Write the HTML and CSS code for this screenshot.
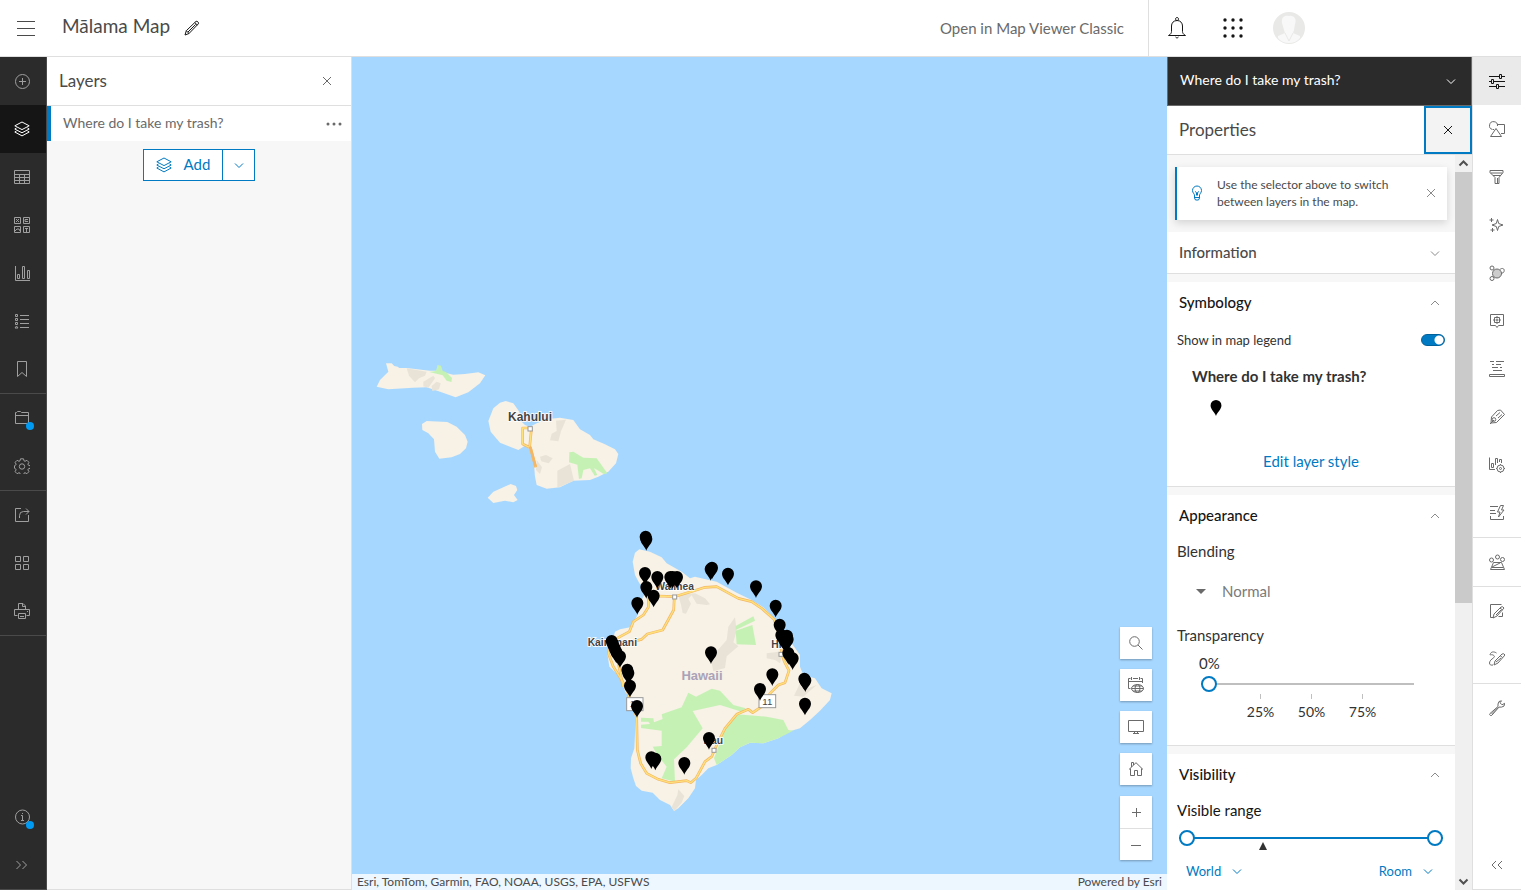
FILE: index.html
```html
<!DOCTYPE html>
<html lang="en">
<head>
<meta charset="utf-8">
<title>Mālama Map</title>
<link rel="stylesheet" href="styles.css">
</head>
<body>
<header class="topbar">
  <button class="plain menu" aria-label="Menu"><svg width="18" height="16" viewBox="0 0 18 16"><path d="M0 1.500h18M0 8.500h18M0 15.500h18"/></svg></button>
  <h1 class="title">Mālama Map</h1>
  <button class="plain edit" aria-label="Edit title"><svg width="16" height="16" viewBox="0 0 16 16"><path d="M1 15l1.300-4.300L12 1.400c1-.8 3.200 1.200 2.400 2.400L5 13.500zM10.800 2.600L13.300 5M2.300 10.700L5 13.500M4 12l7.700-7.600"/></svg></button>
  <a class="classic" href="#">Open in Map Viewer Classic</a>
  <div class="account">
    <button class="plain" aria-label="Notifications"><svg width="18" height="22" viewBox="0 0 18 22"><path d="M9 3.500a1.500 1.500 0 1 1 .1 0C5.500 3.500 3.500 6 3.500 9v5.500c0 1.500-1 3-3 4h17c-2-1-3-2.500-3-4V9c0-3-2-5.500-5.400-5.500M7.500 20c.8 1.200 2.200 1.200 3 0"/></svg></button>
    <button class="plain" aria-label="App launcher"><svg class="solid" width="20" height="20" viewBox="0 0 20 20"><circle cx="2" cy="2" r="1.700"/><circle cx="10" cy="2" r="1.700"/><circle cx="18" cy="2" r="1.700"/><circle cx="2" cy="10" r="1.700"/><circle cx="10" cy="10" r="1.700"/><circle cx="18" cy="10" r="1.700"/><circle cx="2" cy="18" r="1.700"/><circle cx="10" cy="18" r="1.700"/><circle cx="18" cy="18" r="1.700"/></svg></button>
    <button class="plain" aria-label="Profile"><svg class="avatar" width="32" height="32" viewBox="0 0 32 32"><circle cx="16" cy="16" r="16" fill="#e9e9e8"/><path d="M9 11C8 5 12 3 16 4c5-1 8 3 6 8l-1 6-1 3 7 3v2q-4 5-11 5T5 26v-2l7-3-1-3z" fill="#f8f8f8"/><path d="M12 21l4 8 4-8" fill="none" stroke="#e9e9e8"/></svg></button>
  </div>
</header>
<main class="workspace">
  <nav class="rail rail-dark" aria-label="Map tools">
    <button aria-label="Add"><svg class="ico" viewBox="0 0 16 16"><circle cx="8.500" cy="8.500" r="7"/><path d="M8.500 5v7M5 8.500h7"/></svg></button>
    <button class="active" aria-label="Layers"><svg class="ico" viewBox="0 0 16 16"><path d="M8 1L.8 4.800 8 8.600l7.200-3.800zM2.500 7L.8 8 8 11.800 15.200 8l-1.700-1M2.500 10L.8 11 8 14.900l7.200-3.900-1.700-1"/></svg></button>
    <button aria-label="Tables"><svg class="ico" viewBox="0 0 16 16"><path d="M.5 1.500h15v13H.5zM.5 5.500h15M.5 8.500h15M.5 11.500h15M5.500 5.500v9M10.500 5.500v9"/></svg></button>
    <button aria-label="Basemap"><svg class="ico" viewBox="0 0 16 16"><path d="M.5.5h6v6h-6zM9.500.5h6v6h-6zM.5 9.500h6v6h-6zM9.500 9.500h6v6h-6zM2 2l3 3M5 2L2 5M14 2.500h-3v2h3M1 14l2-2h2l1 2M11 11.500h3M12.500 12v3"/></svg></button>
    <button aria-label="Charts"><svg class="ico" viewBox="0 0 16 16"><path d="M1.500 1v14.500H16M3.500 9.500h2v4h-2zM8.500 1.500h2v12h-2zM13.500 5.500h2v8h-2z"/></svg></button>
    <button aria-label="Legend"><svg class="ico" viewBox="0 0 16 16"><path d="M6 2.500h9M6 6.500h9M6 10.500h9M6 14.500h9M1.500 1.500h2v2h-2zM1.500 5.500h2v2h-2zM1.500 9.500h2v2h-2zM1 15l1.500-2L4 15z"/></svg></button>
    <button class="group-end" aria-label="Bookmarks"><svg class="ico" viewBox="0 0 16 16"><path d="M3.500.5h9v15L8 11.500l-4.500 4z"/></svg></button>
    <button aria-label="Save and open"><svg class="ico" viewBox="0 0 16 16"><path d="M1.500 13.500v-11h1l1-1h3l1 1h7v11zM1.500 5.500h13"/></svg><span class="dot"></span></button>
    <button class="group-end" aria-label="Map properties"><svg class="ico" viewBox="0 0 16 16"><use href="#gear"/></svg></button>
    <button aria-label="Share"><svg class="ico" viewBox="0 0 16 16"><path d="M7 1.500H1.500v13h13V8M5.500 11V8.500q0-4 4-4H15M12 1.500l3 3-3 3"/></svg></button>
    <button aria-label="Create app"><svg class="ico" viewBox="0 0 16 16"><path d="M1.500 1.500h5v5h-5zM9.500 1.500h5v5h-5zM1.500 9.500h5v5h-5zM9.500 9.500h5v5h-5z"/></svg></button>
    <button class="group-end" aria-label="Print"><svg class="ico" viewBox="0 0 16 16"><path d="M4.500 6.500v-6H9l2.500 2.500v3.500M8.500 1v2.500h3M3.500 12.500h-3v-6h15v6h-3M4.500 10.500h7v5h-7zM6 13.500h4M13 8.500h1"/></svg></button>
    <span class="spacer"></span>
    <button aria-label="About"><svg class="ico" viewBox="0 0 16 16"><circle cx="8.500" cy="8" r="7"/><path d="M7 6.500h1.500v5M7 11.500h3M8 4.500h1"/></svg><span class="dot"></span></button>
    <button aria-label="Expand"><svg class="ico" viewBox="0 0 16 16"><path d="M2.500 4l4 4-4 4M8.500 4l4 4-4 4"/></svg></button>
  </nav>

  <section class="layers" aria-label="Layers">
    <div class="layers-head"><h2>Layers</h2><button class="plain" aria-label="Close"><svg class="ico" viewBox="0 0 16 16"><use href="#x"/></svg></button></div>
    <div class="layer-row"><span class="label">Where do I take my trash?</span><button class="plain" aria-label="Options"><svg class="ico solid" viewBox="0 0 16 16"><circle cx="2" cy="8" r="1.500"/><circle cx="8" cy="8" r="1.500"/><circle cx="14" cy="8" r="1.500"/></svg></button></div>
    <div class="split">
      <button class="add"><svg class="ico" viewBox="0 0 16 16"><path d="M8 1L.8 4.800 8 8.600l7.200-3.800zM2.500 7L.8 8 8 11.800 15.200 8l-1.700-1M2.500 10L.8 11 8 14.900l7.200-3.900-1.700-1"/></svg><span class="label">Add</span></button>
      <button class="more" aria-label="More add options"><svg class="ico" viewBox="0 0 16 16"><use href="#down"/></svg></button>
    </div>
  </section>

  <section class="map" aria-label="Map">
    <svg class="canvas" viewBox="352 57 815 833" preserveAspectRatio="xMidYMid slice">
      <defs>
        <path id="pin" d="M0 0C-3-11-18-22-18-35a18 18 0 0 1 36 0C18-22 3-11 0 0z"/>
        <g id="gear"><path d="M6.500.8h3l.5 2 1 .5 1.900-1 2 2-1 1.900.5 1 2 .5v2.600l-2 .5-.5 1 1 1.900-2 2-1.900-1-1 .5-.5 2h-3l-.5-2-1-.5-1.900 1-2-2 1-1.900-.5-1-1.100-.5V7.700l1.100-.5.500-1-1-1.900 2-2 1.900 1 1-.5z"/><circle cx="8" cy="8.500" r="2.700"/></g>
        <path id="x" d="M4 4l8 8M12 4l-8 8"/>
        <path id="down" d="M4 6.500l4 4 4-4"/>
        <path id="up" d="M4 10l4-4 4 4"/>
      </defs>
      <g transform="translate(360 350) scale(.333333)">
        <g class="land">
          <path d="M78 40L95 40 103 48 113 50 118 54 140 54 210 62 230 62 280 74 315 72 355 67 376 76 360 100 325 127 287 142 240 125 200 112 160 113 85 118 50 110 60 90 85 65z"/>
          <path d="M186 222L200 213 262 216 290 230 315 255 323 275 318 295 300 312 275 322 238 326 225 305 222 268 205 250 187 240z"/>
          <path d="M437 153L460 160 478 185 480 210 495 225 510 230 530 220 565 207 600 203 640 210 660 238 690 255 700 268 735 283 765 298 775 312 768 340 745 365 715 380 690 390 640 392 600 412 560 416 530 405 525 380 522 345 512 300 495 287 475 300 450 290 420 278 392 245 385 213 400 175 420 158z"/>
          <path d="M383 443L400 425 430 412 452 402 468 408 472 420 462 435 473 450 460 457 435 452 400 459z"/>
        </g>
        <path class="shade" d="M140 55l60 10-5 12-18 8-12 12-18-20zM190 95l30-18 5 8-20 28-15-4zM215 108l15-13 12 5-5 18-20 5zM540 320l18-5 20 10-12 15-22-6zM592 362l38-20 12 50-42 18-8 2zM588 212l30-3-15 35 -8 30-25-3 5-20 15-8zM530 330l16 22-6 20-12-12z"/>
        <path class="park" d="M208 66l20-3 5-18 10 2 5 16 10 3 18 18-2 12-14-4-12-16zM628 307l12-2 30 18 40 2 32 45-10 3-20-13-10-5 10 20-8 2-14-22-20 5-5 25-8 2-5-43-25-7z"/>
        <path class="casing" d="M510 234h-22v48l24 12 15 58M514 240l-5 50"/><path class="road" d="M510 234h-22v48l24 12 15 58M514 240l-5 50"/>
        <path class="casing" d="M510 290l17 60"/>
        <rect class="town" x="504" y="230" width="13" height="13"/>
        <text class="city" x="510" y="213" font-size="36">Kahului</text>
      </g>
      <g transform="translate(570 520) scale(.333333)">
        <path class="land" d="M208 88L240 95 275 112 290 130 335 155 360 175 375 170 440 185 500 218 545 240 580 262 608 290 617 325 645 350 665 370 690 405 690 440 700 465 735 475 755 505 785 520 780 540 750 572 720 600 690 625 655 635 625 655 580 670 540 668 510 682 485 705 440 735 415 745 395 765 378 780 375 805 355 835 325 865 312 873 300 855 270 840 248 818 215 812 198 798 190 775 182 745 183 715 193 685 197 600 190 570 188 540 168 520 155 490 145 465 118 440 112 400 125 370 135 335 150 328 180 322 200 290 213 262 215 240 230 210 208 190 195 165 188 125 195 98z"/>
        <path class="shade" d="M325 225l50-5 30 15 15 18-10 2-30-4-15-25 -10 10 8 15-15 30-10-2-5-25zM495 292l5 40 -10 35 15 12-35 30-5 35-35 10-5-24 10-30 35-40 5-40zM590 400l35-5 10 15-5 20-15-10-25-5zM325 808l18 20-8 20-22 25-8-12 17-35zM690 490l15-25 20 10-10 30 25 -10-40 35-28-3z"/>
        <path class="park" d="M497 318L550 289 555 302 497 330zM497 332L547 315 558 375 500 373zM213 593L250 595 252 607 278 597 275 583 335 562 355 518 378 530 425 506 450 512 490 555 527 565 515 575 450 555 368 573 398 625 350 682 312 718 315 785 275 775 290 740 262 705 248 680 275 678 275 632 213 624 213 614 240 612 235 605 213 605zM465 628L500 583 590 590 640 600 655 630 670 632 625 655 580 670 540 668 510 682 485 705 440 735 432 715z"/>
        <g class="casing"><path d="M250 230L235 235 235 262 220 285 190 305 178 335 150 350 125 365 115 400 130 440 155 480 170 505 180 540 200 590 202 690 212 730 230 760 265 778 300 788 350 782 362 788 378 775 405 725 425 710 440 675 465 625 500 583 535 568 548 578 575 560 600 520 625 495 645 488 657 452 643 425 635 400 630 350 612 298 575 265 545 245 505 235 440 200 405 202 370 213 313 230 265 228z"/><path d="M313 230L311 270 278 330 232 342 215 358 165 370M135 380l12 60 12 60"/></g>
        <g class="road"><path d="M250 230L235 235 235 262 220 285 190 305 178 335 150 350 125 365 115 400 130 440 155 480 170 505 180 540 200 590 202 690 212 730 230 760 265 778 300 788 350 782 362 788 378 775 405 725 425 710 440 675 465 625 500 583 535 568 548 578 575 560 600 520 625 495 645 488 657 452 643 425 635 400 630 350 612 298 575 265 545 245 505 235 440 200 405 202 370 213 313 230 265 228z"/><path d="M313 230L311 270 278 330 232 342 215 358 165 370M135 380l12 60 12 60"/></g>
        <g class="town"><rect x="308" y="225" width="12" height="12"/><rect x="627" y="397" width="12" height="12"/><rect x="426" y="685" width="12" height="12"/><rect x="170" y="533" width="49" height="39"/><rect x="567" y="524" width="50" height="39"/></g>
        <g class="city" font-size="31"><text x="314" y="210">Waimea</text><text x="127" y="379">Kaiminani</text><text x="633" y="384">Hilo</text><text x="430" y="671">Kau</text></g>
        <text class="shield" x="194" y="562">11</text><text class="shield" x="592" y="554">11</text>
        <text class="island" x="396" y="480">Hawaii</text>
        <g>
          <use href="#pin" x="227" y="85"/><use href="#pin" x="229" y="92"/><use href="#pin" x="225" y="194"/><use href="#pin" x="262" y="206"/><use href="#pin" x="301" y="206"/><use href="#pin" x="308" y="206"/><use href="#pin" x="321" y="206"/><use href="#pin" x="229" y="236"/><use href="#pin" x="251" y="262"/><use href="#pin" x="202" y="284"/><use href="#pin" x="422" y="182"/><use href="#pin" x="426" y="178"/><use href="#pin" x="474" y="196"/><use href="#pin" x="558" y="234"/><use href="#pin" x="617" y="292"/><use href="#pin" x="629" y="349"/><use href="#pin" x="634" y="380"/><use href="#pin" x="651" y="382"/><use href="#pin" x="653" y="393"/><use href="#pin" x="645" y="397"/><use href="#pin" x="655" y="434"/><use href="#pin" x="668" y="450"/>
          <use href="#pin" x="125" y="398"/><use href="#pin" x="129" y="407"/><use href="#pin" x="134" y="419"/><use href="#pin" x="139" y="430"/><use href="#pin" x="150" y="444"/><use href="#pin" x="172" y="484"/><use href="#pin" x="175" y="494"/><use href="#pin" x="180" y="532"/><use href="#pin" x="201" y="593"/><use href="#pin" x="423" y="432"/><use href="#pin" x="607" y="498"/><use href="#pin" x="570" y="542"/><use href="#pin" x="703" y="511"/><use href="#pin" x="706" y="516"/><use href="#pin" x="705" y="586"/><use href="#pin" x="417" y="689"/><use href="#pin" x="244" y="747"/><use href="#pin" x="256" y="751"/><use href="#pin" x="343" y="764"/>
        </g>
      </g>
    </svg>
    <div class="controls">
      <button aria-label="Search"><svg class="ico" viewBox="0 0 16 16"><circle cx="6.500" cy="6.500" r="4.800"/><path d="M10 10l4.500 4.500"/></svg></button>
      <button aria-label="Time"><svg class="ico" viewBox="0 0 16 16"><path d="M2.500 11.500h-2v-10h2M5 1.500h5M12.500 1.500h2V6M.5 4.500h14M3.500 0v3M11.500 0v3"/><ellipse cx="9.500" cy="11.500" rx="6" ry="4"/><ellipse cx="9.500" cy="11.500" rx="2.500" ry="4"/><path d="M3.500 11.500h12M5 9h9M5 14h9"/></svg></button>
      <button aria-label="Presentation"><svg class="ico" viewBox="0 0 16 16"><path d="M.5 1.500h15v11H.5zM5 14.500h6M6.500 12.500v2M9.500 12.500v2"/></svg></button>
      <button aria-label="Home"><svg class="ico" viewBox="0 0 16 16"><path d="M1 8.500l7-6.800 7 6.800M2.500 7.500v7h4v-5h3v5h4v-7M3.500 6V1.500h2V4"/></svg></button>
      <div class="zoom">
        <button aria-label="Zoom in"><svg class="ico" viewBox="0 0 16 16"><path d="M4 8.500h9M8.500 4v9"/></svg></button>
        <button aria-label="Zoom out"><svg class="ico" viewBox="0 0 16 16"><path d="M3 8.500h10"/></svg></button>
      </div>
    </div>
    <footer class="credits"><span>Esri, TomTom, Garmin, FAO, NOAA, USGS, EPA, USFWS</span><span>Powered by <a href="#">Esri</a></span></footer>
  </section>

  <aside class="props" aria-label="Properties">
    <button class="picker"><span class="label">Where do I take my trash?</span><svg class="ico" viewBox="0 0 16 16"><use href="#down"/></svg></button>
    <div class="props-head"><h2>Properties</h2><button aria-label="Close"><svg class="ico" viewBox="0 0 16 16"><use href="#x"/></svg></button></div>
    <div class="scroller">
      <div class="content">
        <div class="notice">
          <svg class="ico" viewBox="0 0 16 16"><path d="M5.500 10.500C5.500 8.500 3.500 8 3.500 5.500a4.500 4.500 0 0 1 9 0c0 2.500-2 3-2 5M5.500 10v3l1 2h3l1-2v-3M5.500 12.500h5M6 6.500l1.500 1v3M10 6.500l-1.500 1v3"/></svg>
          <p>Use the selector above to switch between layers in the map.</p>
          <button class="plain" aria-label="Dismiss"><svg class="ico" viewBox="0 0 16 16"><use href="#x"/></svg></button>
        </div>
        <section class="card"><button class="card-head soft"><span class="label">Information</span><svg class="ico" viewBox="0 0 16 16"><use href="#down"/></svg></button></section>
        <section class="card symbology">
          <button class="card-head"><span class="label">Symbology</span><svg class="ico" viewBox="0 0 16 16"><use href="#up"/></svg></button>
          <div class="legend-row"><label for="legend">Show in map legend</label><input class="switch" id="legend" type="checkbox" checked></div>
          <h3>Where do I take my trash?</h3>
          <svg class="marker" width="12" height="16" viewBox="-18 -53 36 53"><use href="#pin"/></svg>
          <a class="style-link" href="#">Edit layer style</a>
        </section>
        <section class="card appearance">
          <button class="card-head"><span class="label">Appearance</span><svg class="ico" viewBox="0 0 16 16"><use href="#up"/></svg></button>
          <label class="field" for="blend">Blending</label>
          <div class="blend"><svg width="10" height="5" viewBox="0 0 10 5"><path d="M0 0h10L5 5z"/></svg><select id="blend"><option>Normal</option></select></div>
          <label class="field" for="opacity">Transparency</label>
          <div class="transparency">
            <output for="opacity">0%</output>
            <input class="slider" id="opacity" type="range" min="0" max="100" value="0">
            <div class="ticks"><span>25%</span><span>50%</span><span>75%</span></div>
          </div>
        </section>
        <section class="card visibility">
          <button class="card-head"><span class="label">Visibility</span><svg class="ico" viewBox="0 0 16 16"><use href="#up"/></svg></button>
          <label class="field strong" for="from">Visible range</label>
          <div class="dual"><input class="slider blue" id="from" type="range" value="0"><input class="slider clear" type="range" value="100" aria-label="Maximum visible range"></div>
          <svg class="scale" width="8" height="8" viewBox="0 0 8 8"><path d="M4 0l4 8H0z"/></svg>
          <div class="range-ends"><button class="plain">World<svg class="ico" viewBox="0 0 16 16"><use href="#down"/></svg></button><button class="plain">Room<svg class="ico" viewBox="0 0 16 16"><use href="#down"/></svg></button></div>
        </section>
      </div>
      <div class="scrollbar"><svg width="17" height="17" viewBox="0 0 17 17"><path d="M4.500 10.500l4-4 4 4"/></svg><div class="track"><div class="thumb"></div></div><svg width="17" height="17" viewBox="0 0 17 17"><path d="M4.500 6.500l4 4 4-4"/></svg></div>
    </div>
  </aside>

  <nav class="rail rail-light" aria-label="Layer tools">
    <button class="active" aria-label="Properties"><svg class="ico" viewBox="0 0 16 16"><path d="M0 3.500h10M13 3.500h3M10.500 1.500h2v4h-2zM0 8.500h2M5 8.500h11M2.500 6.500h2v4h-2zM0 13.500h7M10 13.500h6M7.500 11.500h2v4h-2z"/></svg></button>
    <button aria-label="Styles"><svg class="ico" viewBox="0 0 16 16"><path d="M3.500 8.500A4 4 0 1 1 8.500 5M8 3.500h7.500v9H12M7 7.500l-5.500 8h11zM4 8l1 1"/></svg></button>
    <button aria-label="Filter"><svg class="ico" viewBox="0 0 16 16"><path d="M1 1.500h13v2l-4 5v6H6v-6l-5-5zM1.500 4h12M4 6.500h8M8.500 9v5"/></svg></button>
    <button aria-label="Effects"><svg class="ico" viewBox="0 0 16 16"><path d="M8.500 2.500l1.200 4 4.300 1.500-4.300 1.500-1.200 4-1.200-4L3 8l4.300-1.500zM2.500 1v4M.5 3h4M3.500 11v4M1.500 13h4"/></svg></button>
    <button aria-label="Aggregation"><svg class="ico" viewBox="0 0 16 16"><circle cx="8" cy="8.500" r="4.500" fill="#ccc"/><circle cx="3" cy="3" r="2"/><circle cx="3" cy="13.500" r="2"/><path d="M11 4.500c2-2 5-1 4 2q-1 2-3 2"/></svg></button>
    <button aria-label="Pop-ups"><svg class="ico" viewBox="0 0 16 16"><path d="M1.500 1.500h13v11h-5l-1.500 2-1.500-2h-5zM5.500 4.500h5v5h-5zM8 3v1.500M8 9.500V11M4 7h1.500M10.500 7H12"/><circle cx="8" cy="7" r="1"/></svg></button>
    <button aria-label="Fields"><svg class="ico" viewBox="0 0 16 16"><path d="M1 .5h4M7 .5h8M3 3.500h2M7 3.500h5M3 6.500h6M11 6.500h2M4 9.500h9M.5 13.500h15v2H.5z"/></svg></button>
    <button aria-label="Labels"><svg class="ico" viewBox="0 0 16 16"><path d="M2.500 8l6-6.500 3-.5 4 4.500-8 8-5.500.5zM7 7l4-3.500M9 9l4-3.500M1 15l4-4"/><circle cx="5" cy="10.500" r="1.800"/></svg></button>
    <button aria-label="Configure charts"><svg class="ico" viewBox="0 0 16 16"><path d="M.5.5v12H6M2.500 6.500h2v4h-2zM6.500 8V1.500h2V6M10.500 5V2.500h2V6"/><circle cx="11.500" cy="11.500" r="3.500"/><circle cx="11.500" cy="11.500" r="1"/><path d="M11.500 7v1M11.500 15v1M7 11.500h1M15 11.500h1"/></svg></button>
    <button class="group-end" aria-label="Forms"><svg class="ico" viewBox="0 0 16 16"><path d="M1 1.500h8M1 5.500h5M1 8.500h6M1.500 11v3.500h13V11M11.500.5L8.500 7H11l-1.500 5L15 5h-2.500l2-4.500z"/></svg></button>
    <button class="group-end" aria-label="Collaboration"><svg class="ico" viewBox="0 0 16 16"><circle cx="8.500" cy="3" r="2"/><circle cx="2.500" cy="6" r="2"/><circle cx="13.500" cy="5.500" r="2"/><path d="M4.500 8.500h8l3 7h-14zM3 13l8-4M3 13.500h11"/></svg></button>
    <button aria-label="Edit"><svg class="ico" viewBox="0 0 16 16"><path d="M12.500 1.500h-11v13h3M13.500 9.500v4h-4M4 15l1-4 7-7q2-1 3 1l-7 8zM11 5l2.500 2M7 12l5-5"/></svg></button>
    <button class="group-end" aria-label="Sketch"><svg class="ico" viewBox="0 0 16 16"><path d="M4 14C-1 15 0 10 3 8s3-3 1-4-4 1-2.500-1.500S6 1 7.500 2M5 14l1-4 7-7q2-1 3 1l-7 8zM11 4.500l2.500 2M7 11l5-4"/></svg></button>
    <button aria-label="Map tools"><svg class="ico" viewBox="0 0 16 16"><path d="M12.500.8L10 1.500 9 4v2.500l-8 7q-1 1 .2 1.800 1 .8 1.800-.2l7-8h2.500l2.500-1 .7-2.800-2.700 1.500-2-2zM2.500 14L9 7.500"/></svg></button>
    <span class="spacer"></span>
    <button aria-label="Collapse"><svg class="ico" viewBox="0 0 16 16"><path d="M7 4L3 8l4 4M13 4L9 8l4 4"/></svg></button>
  </nav>
</main>
</body>
</html>
```
FILE: styles.css
```css
* { box-sizing: border-box; }
html, body { height: 100%; }
body { margin: 0; display: flex; flex-direction: column; overflow: hidden; background: #fff; color: #4a4a4a; font: 15px/20px Lato, "Open Sans", sans-serif; }
h1, h2, h3, p { margin: 0; font-weight: 400; }
a { color: inherit; text-decoration: none; }
button { font: inherit; color: inherit; background: #fff; border: 0; padding: 0; display: flex; align-items: center; justify-content: center; cursor: pointer; }
.plain { background: transparent; }
svg { flex: none; fill: none; stroke: currentColor; }
.solid { fill: currentColor; stroke: none; }
.ico { width: 16px; height: 16px; }
.label { padding-bottom: 2px; }

.topbar { display: flex; align-items: center; height: 57px; flex: none; padding-left: 17px; border-bottom: 1px solid #dfdfdf; }
.title { margin: 0 14px 4px 27px; font-size: 19px; line-height: 24px; }
.edit { color: #151515; }
.classic { margin-left: auto; padding-right: 24px; color: #6a6a6a; }
.account { display: flex; align-items: center; height: 56px; width: 373px; padding-left: 19px; gap: 30px; border-left: 1px solid #dfdfdf; color: #151515; }
.account .plain:nth-child(2) { margin-left: 7px; }
.avatar { stroke: none; }

.workspace { flex: 1; min-height: 0; display: flex; }
.rail { flex: none; display: flex; flex-direction: column; }
.rail button { position: relative; height: 48px; background: transparent; flex: none; }
.rail .group-end { height: 49px; border-bottom: 1px solid #dfdfdf; }
.spacer { flex: 1; }
.rail-dark { width: 47px; background: #2b2b2b; color: #9f9f9f; border-right: 1px solid #4a4a4a; border-bottom: 1px solid #4a4a4a; }
.rail-dark button { padding-right: 2px; }
.rail-dark .active { background: #151515; color: #fff; }
.rail-dark .group-end { border-color: #4a4a4a; }
.dot { position: absolute; left: 26px; top: 28px; width: 8px; height: 8px; border-radius: 50%; background: #009af2; }
.rail-light { width: 49px; border-left: 1px solid #dfdfdf; color: #6a6a6a; border-bottom: 1px solid #dfdfdf; }
.rail-light .active { background: #eaeaea; color: #151515; }

.layers { flex: none; width: 305px; background: #f7f7f7; border-right: 1px solid #dfdfdf; border-bottom: 1px solid #dfdfdf; }
.layers-head { display: flex; align-items: center; justify-content: space-between; height: 49px; padding: 0 16px 0 12px; background: #fff; border-bottom: 1px solid #dfdfdf; }
h2 { font-size: 17px; line-height: 20px; }
.layers-head button { color: #6a6a6a; }
.layer-row { display: flex; align-items: center; justify-content: space-between; height: 35px; padding: 0 9px 0 12px; background: #fff; border-left: 4px solid #007ac2; color: #6a6a6a; font-size: 14px; }
.split { display: flex; width: 112px; height: 32px; margin: 8px auto; border: 1px solid #007ac2; color: #007ac2; }
.split .add { flex: 1; gap: 12px; }
.split .more { width: 32px; border-left: 1px solid #007ac2; }

.map { position: relative; flex: 1; min-width: 0; background: #a6d7ff; overflow: hidden; }
.canvas { display: block; width: 100%; height: 100%; stroke: none; }
.land { fill: #f7f1e6; }
.shade { fill: #e9e3d7; }
.park { fill: #c5f2b4; }
.casing, .road { fill: none; stroke-linejoin: round; }
.casing { stroke: #f4b663; stroke-width: 8px; }
.road { stroke: #ffe17c; stroke-width: 4px; }
.town { fill: #fff; stroke: #999; stroke-width: 3px; }
.canvas text { font-family: "Liberation Sans", sans-serif; text-anchor: middle; }
.city { fill: #444; font-weight: 700; stroke: #fff; stroke-width: 5px; paint-order: stroke; }
.shield { fill: #444; font-size: 29px; }
.island { fill: #aaa2b8; font-size: 39px; font-weight: 700; }
.canvas use { fill: #000; }
.controls { position: absolute; right: 15px; bottom: 30px; display: flex; flex-direction: column; gap: 10px; color: #6a6a6a; }
.controls button { width: 32px; height: 32px; }
.controls > * { box-shadow: 0 1px 2px rgba(0, 0, 0, .3); }
.zoom { margin-top: 1px; background: #fff; }
.zoom button + button { border-top: 1px solid #dfdfdf; }
.credits { position: absolute; left: 0; right: 0; bottom: 0; display: flex; justify-content: space-between; padding: 0 5px; font-size: 12px; line-height: 16px; background: rgba(255, 255, 255, .8); color: #4a4a4a; }

.props { flex: none; width: 305px; display: flex; flex-direction: column; }
.picker { flex: none; height: 49px; padding: 0 12px; justify-content: space-between; background: #2b2b2b; color: #fff; border: 1px solid #6a6a6a; border-top: 0; font-size: 14px; }
.props-head { flex: none; display: flex; align-items: center; justify-content: space-between; height: 49px; padding-left: 12px; border-bottom: 1px solid #dfdfdf; }
.props-head button { width: 48px; height: 48px; border: 2px solid #007ac2; background: #f3f3f3; color: #151515; }
.scroller { flex: 1; min-height: 0; display: flex; }
.content { flex: 1; overflow: hidden; padding-top: 12px; background: #f7f7f7; }
.notice { display: flex; align-items: center; margin: 0 8px 12px; padding: 9px 8px 10px 12px; background: #fff; border-left: 2px solid #007ac2; box-shadow: 0 3px 8px rgba(0, 0, 0, .14); }
.notice > svg { color: #007ac2; }
.notice p { flex: 1; margin: 0 16px 0 12px; font-size: 12px; line-height: 17px; }
.notice button, .card-head svg { color: #8a8a8a; }
.card { display: flex; flex-direction: column; margin-bottom: 8px; background: #fff; border-bottom: 1px solid #dfdfdf; color: #323232; }
.card-head { height: 41px; padding: 0 12px; justify-content: space-between; color: #151515; font-weight: 500; }
.card-head.soft { color: #4a4a4a; }
.symbology { height: 205px; }
.legend-row { display: flex; align-items: center; justify-content: space-between; height: 33px; padding: 0 10px; font-size: 13px; }
.switch { appearance: none; margin: 0; width: 24px; height: 12px; border-radius: 6px; border: 1px solid #00619b; background: radial-gradient(circle at 17px 5px, #fff 4px, #007ac2 5px); }
h3 { margin: 10px 25px 14px; font-size: 15px; line-height: 20px; font-weight: 700; }
.marker { margin-left: 43px; fill: #000; stroke: none; }
.style-link { align-self: center; margin-top: 35px; color: #007ac2; }
.appearance { height: 251px; }
.field { padding: 5px 10px; height: 30px; }
.blend { display: flex; align-items: center; gap: 12px; height: 40px; padding: 0 29px; margin: 5px 0 9px; color: #6a6a6a; }
.blend svg { fill: currentColor; stroke: none; }
select { appearance: none; border: 0; background: transparent; font: inherit; color: #7a7a7a; padding: 0 4px; }
.transparency { display: flex; flex-direction: column; margin: 3px 41px 0 34px; }
.transparency output { line-height: 20px; margin-left: -2px; }
.transparency .slider { margin: 3px 0 1px; }
.ticks { display: flex; justify-content: space-around; padding: 1px 26px 0 34px; font-size: 14px; }
.ticks span { flex: 1; display: flex; flex-direction: column; align-items: center; gap: 3px; }
.ticks span::before { content: ""; width: 1px; height: 5px; background: #bfbfbf; }
.slider { appearance: none; margin: 0; width: 100%; height: 16px; background: linear-gradient(#bfbfbf, #bfbfbf) center / 100% 2px no-repeat; }
.slider.blue { background-image: linear-gradient(#007ac2, #007ac2); }
.slider.clear { background: none; pointer-events: none; }
.slider::-webkit-slider-thumb { appearance: none; width: 16px; height: 16px; border-radius: 50%; border: 2px solid #007ac2; background: #fff; pointer-events: auto; }
.strong { color: #151515; }
.dual { display: grid; padding: 0 12px; margin-top: 5px; }
.dual input { grid-area: 1 / 1; }
.scale { margin-left: 92px; margin-top: -4px; fill: #323232; stroke: none; }
.range-ends { display: flex; justify-content: space-between; padding: 11px 19px; color: #007ac2; font-size: 13px; line-height: 20px; }
.range-ends button { gap: 8px; }
.scrollbar { flex: none; width: 17px; display: flex; flex-direction: column; background: #f0f0f0; color: #505050; }
.scrollbar svg { stroke-width: 2px; }
.track { flex: 1; }
.thumb { height: 61.5%; background: #cacaca; }
```
